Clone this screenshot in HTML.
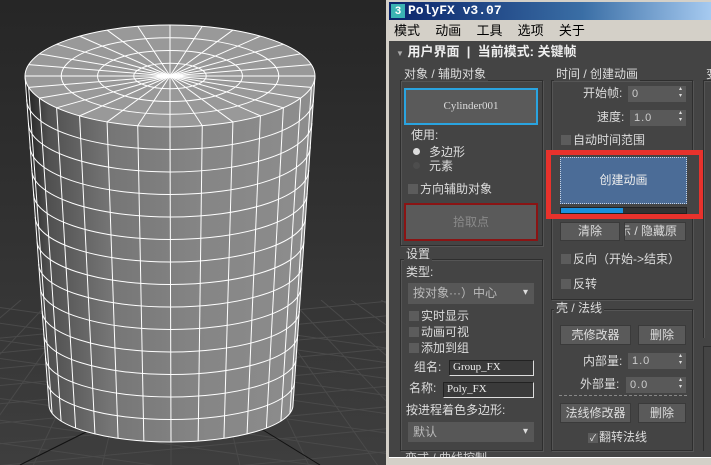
<!DOCTYPE html>
<html><head><meta charset="utf-8">
<style>
*{margin:0;padding:0;box-sizing:border-box}
html,body{width:711px;height:465px;overflow:hidden}
body{background:#2c2c2c;font-family:"Liberation Sans","Noto Sans CJK SC",sans-serif;font-size:12px;color:#dcdcdc;position:relative}
.a{position:absolute;white-space:nowrap}
.grp{position:absolute;border:1px solid #2e2e2e;box-shadow:inset 1px 1px 0 #555,1px 1px 0 #555}
.gt{position:absolute;background:#444;padding:0 2px;line-height:14px;color:#ddd}
.btn{position:absolute;background:#5a5a5a;color:#ddd;text-align:center;border:1px solid #3a3a3a}
.chk{position:absolute;width:10px;height:10px;background:#5c5c5c}
.spin{position:absolute;background:#595959;height:16px;color:#ccc;padding-left:4px;line-height:16px;font-size:11px;letter-spacing:1px}
.spin:after{content:"▴\A▾";white-space:pre;position:absolute;right:3px;top:0;font-size:6px;line-height:7px;color:#ddd}
.inp{position:absolute;background:#3a3a3a;border:1px solid #ddd;border-top-color:#222;border-left-color:#222;color:#eee;font-family:"Liberation Serif",serif;font-size:11px;line-height:13px;padding-left:3px}
.dd{position:absolute;background:#575757;color:#bbb;padding-left:5px;line-height:20px}
.dd:after{content:"▾";position:absolute;right:6px;top:0;font-size:10px;color:#ddd}
</style></head><body>
<svg width="386" height="465" style="position:absolute;left:0;top:0" id="vp">
<defs>
<linearGradient id="bg" x1="0" y1="0" x2="0" y2="1"><stop offset="0" stop-color="#262626"/><stop offset="1" stop-color="#3e3e3e"/></linearGradient>
<linearGradient id="side" x1="0" y1="0" x2="1" y2="0"><stop offset="0" stop-color="#1e1e1e"/><stop offset="0.08" stop-color="#505050"/><stop offset="0.3" stop-color="#767676"/><stop offset="0.6" stop-color="#858585"/><stop offset="1" stop-color="#8e8e8e"/></linearGradient>
<clipPath id="fl"><rect x="0" y="300" width="386" height="165"/></clipPath>
</defs>
<rect width="386" height="465" fill="url(#bg)"/>
<g id="grid" stroke="#4a4a4a" stroke-width="1" fill="none" clip-path="url(#fl)"></g>
<g id="cyl"></g>
</svg>
<script>
(function(){
var ns="http://www.w3.org/2000/svg",g=document.getElementById('grid'),c=document.getElementById('cyl');
function el(p,t,a){var e=document.createElementNS(ns,t);for(var k in a)e.setAttribute(k,a[k]);p.appendChild(e);return e;}
for(var i=-14;i<=14;i++){el(g,'line',{x1:171+i*30,y1:300,x2:171+i*70,y2:470});}
for(var j=0;j<12;j++){var y=310+j*14+j*j*0.6;el(g,'line',{x1:-20,y1:y+30,x2:400,y2:y-10});el(g,'line',{x1:-20,y1:y-20,x2:400,y2:y+40});}
el(c,'line',{x1:20,y1:465,x2:110,y2:420,stroke:'#111'});
el(c,'line',{x1:255,y1:425,x2:320,y2:465,stroke:'#111'});
var tx=170,ty=76,trx=145,try_=51,bx=171,by=405,brx=122,bry=37;
var N=28,R=14;
var d='M'+(tx-trx)+','+ty+' A'+trx+','+try_+' 0 0 0 '+(tx+trx)+','+ty+' L'+(bx+brx)+','+by+' A'+brx+','+bry+' 0 0 1 '+(bx-brx)+','+by+' Z';
el(c,'path',{d:d,fill:'url(#side)'});
el(c,'ellipse',{cx:tx,cy:ty,rx:trx,ry:try_,fill:'#999'});
var s='#fff';
for(var r=1;r<=4;r++){el(c,'ellipse',{cx:tx,cy:ty,rx:trx*r/4,ry:try_*r/4,fill:'none',stroke:s,'stroke-width':1});}
for(var k=0;k<N;k++){var a=k/N*2*Math.PI;el(c,'line',{x1:tx,y1:ty,x2:tx+trx*Math.cos(a),y2:ty+try_*Math.sin(a),stroke:s,'stroke-width':1});}
for(var k=0;k<=N/2;k++){var a=k/N*2*Math.PI;el(c,'line',{x1:tx+trx*Math.cos(a),y1:ty+try_*Math.sin(a),x2:bx+brx*Math.cos(a),y2:by+bry*Math.sin(a),stroke:s,'stroke-width':1});}
for(var r=1;r<=R;r++){var t=r/R,cx=tx+(bx-tx)*t,cy=ty+(by-ty)*t,rx=trx+(brx-trx)*t,ry=try_+(bry-try_)*t;
el(c,'path',{d:'M'+(cx-rx)+','+cy+' A'+rx+','+ry+' 0 0 0 '+(cx+rx)+','+cy,fill:'none',stroke:s,'stroke-width':1});}
})();
</script>

<div class="a" style="left:386px;top:0;width:325px;height:465px;background:#d4d0c8"></div>
<div class="a" style="left:389px;top:2px;width:322px;height:18px;background:linear-gradient(90deg,#0a246a,#3a6ea5 60%,#a6caf0)"></div>
<div class="a" style="left:391px;top:4px;width:14px;height:14px;background:#3bb3b3;color:#fff;font-weight:bold;font-size:11px;text-align:center;line-height:14px">3</div>
<div class="a" style="left:408px;top:3px;color:#fff;font-family:'Liberation Mono',monospace;font-weight:bold;font-size:13px;line-height:16px">PolyFX v3.07</div>
<div class="a" style="left:394px;top:22px;color:#000;font-size:13px;line-height:18px;word-spacing:4px">模式 &nbsp;动画 &nbsp;工具 &nbsp;选项 &nbsp;关于</div>
<div class="a" style="left:389px;top:41px;width:322px;height:417px;background:#444;overflow:hidden"></div>
<div class="a" style="left:396px;top:43px;font-weight:bold;color:#eee;font-size:13px;line-height:18px"><span style="font-size:8px;color:#aaa">▼</span> 用户界面 &nbsp;| &nbsp;当前模式: 关键帧</div>

<div class="grp" style="left:400px;top:80px;width:143px;height:166px"></div>
<div class="gt" style="left:402px;top:67px">对象 / 辅助对象</div>
<div class="btn" style="left:404px;top:88px;width:134px;height:37px;border:2px solid #2aa4e0;line-height:33px;font-family:'Liberation Serif',serif;font-size:11px">Cylinder001</div>
<div class="a" style="left:411px;top:128px;line-height:14px">使用:</div>
<div class="a" style="left:413px;top:148px;width:7px;height:7px;border-radius:50%;background:#ddd"></div>
<div class="a" style="left:429px;top:145px;line-height:14px">多边形</div>
<div class="a" style="left:413px;top:162px;width:7px;height:7px;border-radius:50%;background:#4d4d4d"></div>
<div class="a" style="left:429px;top:159px;line-height:14px">元素</div>
<div class="chk" style="left:408px;top:184px"></div>
<div class="a" style="left:420px;top:182px;line-height:14px">方向辅助对象</div>
<div class="btn" style="left:404px;top:203px;width:134px;height:38px;border:2px solid #8a1414;line-height:34px;color:#8a8a8a">拾取点</div>

<div class="grp" style="left:400px;top:259px;width:143px;height:192px"></div>
<div class="gt" style="left:404px;top:247px">设置</div>
<div class="a" style="left:406px;top:265px;line-height:14px">类型:</div>
<div class="dd" style="left:408px;top:283px;width:126px;height:21px">按对象···）中心</div>
<div class="chk" style="left:409px;top:311px"></div><div class="a" style="left:421px;top:309px;line-height:14px">实时显示</div>
<div class="chk" style="left:409px;top:327px"></div><div class="a" style="left:421px;top:325px;line-height:14px">动画可视</div>
<div class="chk" style="left:409px;top:343px"></div><div class="a" style="left:421px;top:341px;line-height:14px">添加到组</div>
<div class="a" style="left:414px;top:360px;line-height:14px">组名:</div>
<div class="inp" style="left:449px;top:360px;width:85px;height:16px">Group_FX</div>
<div class="a" style="left:409px;top:381px;line-height:14px">名称:</div>
<div class="inp" style="left:443px;top:382px;width:91px;height:16px">Poly_FX</div>
<div class="a" style="left:406px;top:403px;line-height:14px">按进程着色多边形:</div>
<div class="dd" style="left:408px;top:422px;width:126px;height:20px">默认</div>
<div class="a" style="left:405px;top:451px;width:120px;height:6px;overflow:hidden;line-height:14px;color:#ccc">变式 / 曲线控制</div>

<div class="grp" style="left:551px;top:80px;width:142px;height:220px"></div>
<div class="gt" style="left:554px;top:67px">时间 / 创建动画</div>
<div class="a" style="left:583px;top:86px;line-height:14px">开始帧:</div>
<div class="spin" style="left:628px;top:86px;width:58px">0</div>
<div class="a" style="left:597px;top:110px;line-height:14px">速度:</div>
<div class="spin" style="left:630px;top:110px;width:56px">1.0</div>
<div class="chk" style="left:561px;top:135px"></div>
<div class="a" style="left:573px;top:133px;line-height:14px">自动时间范围</div>
<div class="a" style="left:546px;top:150px;width:158px;height:69px;border:5px solid #e8322c;background:#444"></div>
<div class="a" style="left:560px;top:157px;width:127px;height:47px;background:#4b6c97;border:1px dotted #c8d4e4;text-align:center;line-height:45px;color:#eee">创建动画</div>
<div class="a" style="left:560px;top:207px;width:127px;height:7px;background:#333;border:1px solid #222"></div>
<div class="a" style="left:561px;top:208px;width:62px;height:5px;background:#1a90dc"></div>
<div class="btn" style="left:560px;top:222px;width:60px;height:19px;line-height:17px">清除</div>
<div class="btn" style="left:624px;top:222px;width:62px;height:19px;line-height:17px;overflow:hidden;text-align:left"><span style="margin-left:-6px">示 / 隐藏原对</span></div>
<div class="chk" style="left:561px;top:254px"></div>
<div class="a" style="left:573px;top:252px;line-height:14px">反向（开始-&gt;结束）</div>
<div class="chk" style="left:561px;top:279px"></div>
<div class="a" style="left:573px;top:277px;line-height:14px">反转</div>

<div class="grp" style="left:551px;top:309px;width:142px;height:142px"></div>
<div class="gt" style="left:554px;top:301px">壳 / 法线</div>
<div class="btn" style="left:560px;top:325px;width:71px;height:20px;line-height:18px">壳修改器</div>
<div class="btn" style="left:638px;top:325px;width:48px;height:20px;line-height:18px">删除</div>
<div class="a" style="left:583px;top:354px;line-height:14px">内部量:</div>
<div class="spin" style="left:628px;top:353px;width:58px">1.0</div>
<div class="a" style="left:580px;top:377px;line-height:14px">外部量:</div>
<div class="spin" style="left:626px;top:377px;width:60px">0.0</div>
<div class="a" style="left:559px;top:395px;width:128px;border-top:1px dashed #888"></div>
<div class="btn" style="left:560px;top:403px;width:71px;height:20px;line-height:18px">法线修改器</div>
<div class="btn" style="left:638px;top:403px;width:48px;height:20px;line-height:18px">删除</div>
<div class="chk" style="left:588px;top:433px;font-size:9px;line-height:10px;text-align:center;color:#eee">✓</div>
<div class="a" style="left:599px;top:430px;line-height:14px">翻转法线</div>

<div class="a" style="left:703px;top:80px;width:8px;height:258px;border-left:1px solid #2e2e2e;border-top:1px solid #2e2e2e;box-shadow:inset 1px 1px 0 #555"></div>
<div class="a" style="left:706px;top:67px;width:5px;overflow:hidden;line-height:14px">变</div>
<div class="a" style="left:703px;top:346px;width:8px;height:105px;border-left:1px solid #2e2e2e;border-top:1px solid #2e2e2e"></div>
<div class="a" style="left:389px;top:457px;width:322px;height:8px;background:#d4d0c8;border-top:1px solid #fff"></div>
</body></html>
